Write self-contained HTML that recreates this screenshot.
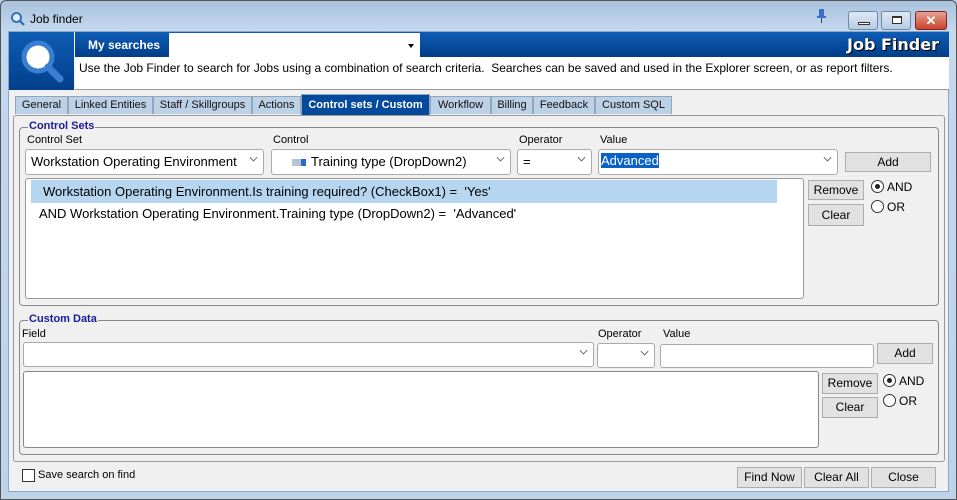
<!DOCTYPE html>
<html><head><meta charset="utf-8"><style>
*{box-sizing:border-box;margin:0;padding:0}
body{width:957px;height:500px;overflow:hidden;font-family:"Liberation Sans",Arial,sans-serif;font-size:12px;color:#000;background:#b9d1ea;position:relative}
.a{position:absolute}
.frame{left:0;top:0;width:957px;height:500px;background:linear-gradient(#a9c2dd,#c4d8ee 30px,#bcd3ea);border:1px solid #555;border-radius:6px 6px 0 0}
.client{left:8px;top:31px;width:941px;height:461px;background:#f0f0f0;border:1px solid #8ca5c0}
.btn{position:absolute;background:#e1e1e1;border:1px solid #adadad;text-align:center;font-size:12px;line-height:18px}
.cb{position:absolute;background:#fff;border:1px solid #aaa;border-radius:3px;font-size:13px;line-height:20px;padding-left:5px}
.chev{position:absolute;right:6px;top:4px;width:7px;height:7px;border-right:1px solid #555;border-bottom:1px solid #555;transform:rotate(45deg) scale(.8)}
.grp{position:absolute;border:1px solid #888;border-radius:4px}
.gl{position:absolute;top:-8px;left:8px;background:#f0f0f0;color:#1a1a9c;font-weight:bold;font-size:11px;padding:0 1px}
.tab{position:absolute;top:96px;height:18px;background:#bcd0e6;border:1px solid #8fa6bf;border-bottom:none;font-size:11px;line-height:17px;text-align:center;color:#111}
.rad{position:absolute;width:13px;height:13px;border:1px solid #333;border-radius:50%;background:#fff}
.lbl{position:absolute;font-size:11px}
</style></head><body>
<div class="a frame"></div>
<svg class="a" style="left:10px;top:11px" width="16" height="16"><circle cx="6.5" cy="6.5" r="4.5" fill="#dfeefa" stroke="#2b6cb0" stroke-width="1.8"/><line x1="10" y1="10" x2="14" y2="14" stroke="#2b6cb0" stroke-width="2.2"/></svg>
<div class="a" style="left:30px;top:12px;font-size:12px">Job finder</div>
<svg class="a" style="left:817px;top:8px" width="10" height="16"><rect x="2" y="1" width="5" height="8" fill="#3a6fd0"/><rect x="0" y="8" width="9" height="2" fill="#3a6fd0"/><line x1="4.5" y1="10" x2="4.5" y2="15" stroke="#444"/></svg>
<div class="a" style="left:848px;top:11px;width:30px;height:19px;border:1px solid #6e87a5;border-radius:3px;background:linear-gradient(#dfe9f5,#b8cbe2)"><div class="a" style="left:9px;top:10px;width:12px;height:3px;border:1px solid #333;background:#fff"></div></div>
<div class="a" style="left:881px;top:11px;width:30px;height:19px;border:1px solid #6e87a5;border-radius:3px;background:linear-gradient(#dfe9f5,#b8cbe2)"><div class="a" style="left:10px;top:4px;width:10px;height:8px;border:1px solid #333;border-top-width:2px;background:#fff"></div></div>
<div class="a" style="left:915px;top:11px;width:32px;height:19px;border:1px solid #7a2a20;border-radius:3px;background:linear-gradient(#e8a090,#c8432e);color:#fff;font-weight:bold;text-align:center;line-height:17px;font-size:13px">✕</div>
<div class="a client"></div>
<!-- header -->
<div class="a" style="left:9px;top:32px;width:65px;height:58px;background:linear-gradient(#0e5db4,#023f8a)"></div>
<svg class="a" style="left:17px;top:36px" width="50" height="50"><circle cx="21" cy="21" r="14" fill="#fff" stroke="#3a7fcf" stroke-width="5"/><line x1="31" y1="31" x2="43" y2="43" stroke="#3a7fcf" stroke-width="7" stroke-linecap="round"/></svg>
<div class="a" style="left:75px;top:32px;width:874px;height:25px;background:linear-gradient(#0d5cb5,#023e88)"></div>
<div class="a" style="left:88px;top:38px;color:#fff;font-weight:bold;font-size:12px">My searches</div>
<div class="a" style="left:169px;top:33px;width:251px;height:24px;background:#fff"><div class="a" style="right:6px;top:11px;border:3px solid transparent;border-top:4px solid #000"></div></div>
<div class="a" style="right:18px;top:35px;color:#fff;font-weight:bold;font-size:16px;font-family:'DejaVu Sans',sans-serif;text-shadow:0 0 1px #000,1px 1px 0 #000">Job Finder</div>
<div class="a" style="left:75px;top:57px;width:874px;height:33px;background:#fff;border-bottom:1px solid #999"></div>
<div class="a" style="left:79px;top:61px;font-size:12px">Use the Job Finder to search for Jobs using a combination of search criteria.&nbsp; Searches can be saved and used in the Explorer screen, or as report filters.</div>
<!-- tabs -->
<div class="tab" style="left:15px;width:53px">General</div>
<div class="tab" style="left:68px;width:85px">Linked Entities</div>
<div class="tab" style="left:153px;width:99px">Staff / Skillgroups</div>
<div class="tab" style="left:252px;width:49px">Actions</div>
<div class="tab" style="left:301px;top:94px;height:21px;width:129px;background:#044a9c;color:#fff;font-weight:bold;line-height:20px">Control sets / Custom</div>
<div class="tab" style="left:430px;width:61px">Workflow</div>
<div class="tab" style="left:491px;width:42px">Billing</div>
<div class="tab" style="left:533px;width:62px">Feedback</div>
<div class="tab" style="left:595px;width:77px">Custom SQL</div>
<div class="a" style="left:13px;top:115px;width:932px;height:347px;border:1px solid #999;border-radius:3px"></div>
<!-- Control sets -->
<div class="grp" style="left:19px;top:127px;width:920px;height:179px"><span class="gl">Control Sets</span></div>
<div class="lbl" style="left:27px;top:134px">Control Set</div>
<div class="lbl" style="left:273px;top:134px">Control</div>
<div class="lbl" style="left:519px;top:134px">Operator</div>
<div class="lbl" style="left:600px;top:134px">Value</div>
<div class="cb" style="left:25px;top:149px;width:239px;height:26px;line-height:24px">Workstation Operating Environment<div class="chev"></div></div>
<div class="cb" style="left:271px;top:149px;width:240px;height:26px;line-height:24px;padding-left:20px"><span style="display:inline-block;width:14px;height:7px;background:#b8c4d4;border-right:5px solid #2a6ad0;margin-right:5px"></span>Training type (DropDown2)<div class="chev"></div></div>
<div class="cb" style="left:517px;top:149px;width:75px;height:26px;line-height:24px">=<div class="chev"></div></div>
<div class="cb" style="left:598px;top:149px;width:240px;height:26px;line-height:22px;padding-left:2px"><span style="background:#0a62c8;color:#fff">Advanced</span><div class="chev"></div></div>
<div class="btn" style="left:845px;top:152px;width:86px;height:20px">Add</div>
<div class="a" style="left:25px;top:178px;width:779px;height:121px;background:#fff;border:1px solid #999;border-radius:3px"></div>
<div class="a" style="left:31px;top:180px;width:746px;height:23px;background:#b5d5f0"></div>
<div class="a" style="left:43px;top:184px;font-size:13px">Workstation Operating Environment.Is training required? (CheckBox1) = &nbsp;'Yes'</div>
<div class="a" style="left:39px;top:206px;font-size:13px">AND Workstation Operating Environment.Training type (DropDown2) = &nbsp;'Advanced'</div>
<div class="btn" style="left:808px;top:180px;width:56px;height:20px">Remove</div>
<div class="btn" style="left:808px;top:204px;width:56px;height:22px;line-height:20px">Clear</div>
<div class="rad" style="left:871px;top:180px"><div class="a" style="left:3px;top:3px;width:5px;height:5px;border-radius:50%;background:#222"></div></div>
<div class="lbl" style="left:887px;top:180px;font-size:12px">AND</div>
<div class="rad" style="left:871px;top:200px"></div>
<div class="lbl" style="left:887px;top:200px;font-size:12px">OR</div>
<!-- Custom data -->
<div class="grp" style="left:19px;top:320px;width:920px;height:135px"><span class="gl">Custom Data</span></div>
<div class="lbl" style="left:22px;top:328px">Field</div>
<div class="lbl" style="left:598px;top:328px">Operator</div>
<div class="lbl" style="left:663px;top:328px">Value</div>
<div class="cb" style="left:23px;top:342px;width:571px;height:25px"><div class="chev"></div></div>
<div class="cb" style="left:597px;top:343px;width:58px;height:25px"><div class="chev"></div></div>
<div class="cb" style="left:660px;top:344px;width:214px;height:24px"></div>
<div class="btn" style="left:877px;top:343px;width:56px;height:21px">Add</div>
<div class="a" style="left:23px;top:371px;width:796px;height:77px;background:#fff;border:1px solid #888;border-radius:3px"></div>
<div class="btn" style="left:822px;top:373px;width:56px;height:21px">Remove</div>
<div class="btn" style="left:822px;top:397px;width:56px;height:21px">Clear</div>
<div class="rad" style="left:883px;top:374px"><div class="a" style="left:3px;top:3px;width:5px;height:5px;border-radius:50%;background:#222"></div></div>
<div class="lbl" style="left:899px;top:374px;font-size:12px">AND</div>
<div class="rad" style="left:883px;top:394px"></div>
<div class="lbl" style="left:899px;top:394px;font-size:12px">OR</div>
<!-- bottom -->
<div class="a" style="left:22px;top:469px;width:13px;height:13px;border:1px solid #333;background:#fff"></div>
<div class="lbl" style="left:38px;top:469px">Save search on find</div>
<div class="btn" style="left:737px;top:467px;width:65px;height:21px">Find Now</div>
<div class="btn" style="left:804px;top:467px;width:65px;height:21px">Clear All</div>
<div class="btn" style="left:871px;top:467px;width:65px;height:21px">Close</div>
</body></html>
